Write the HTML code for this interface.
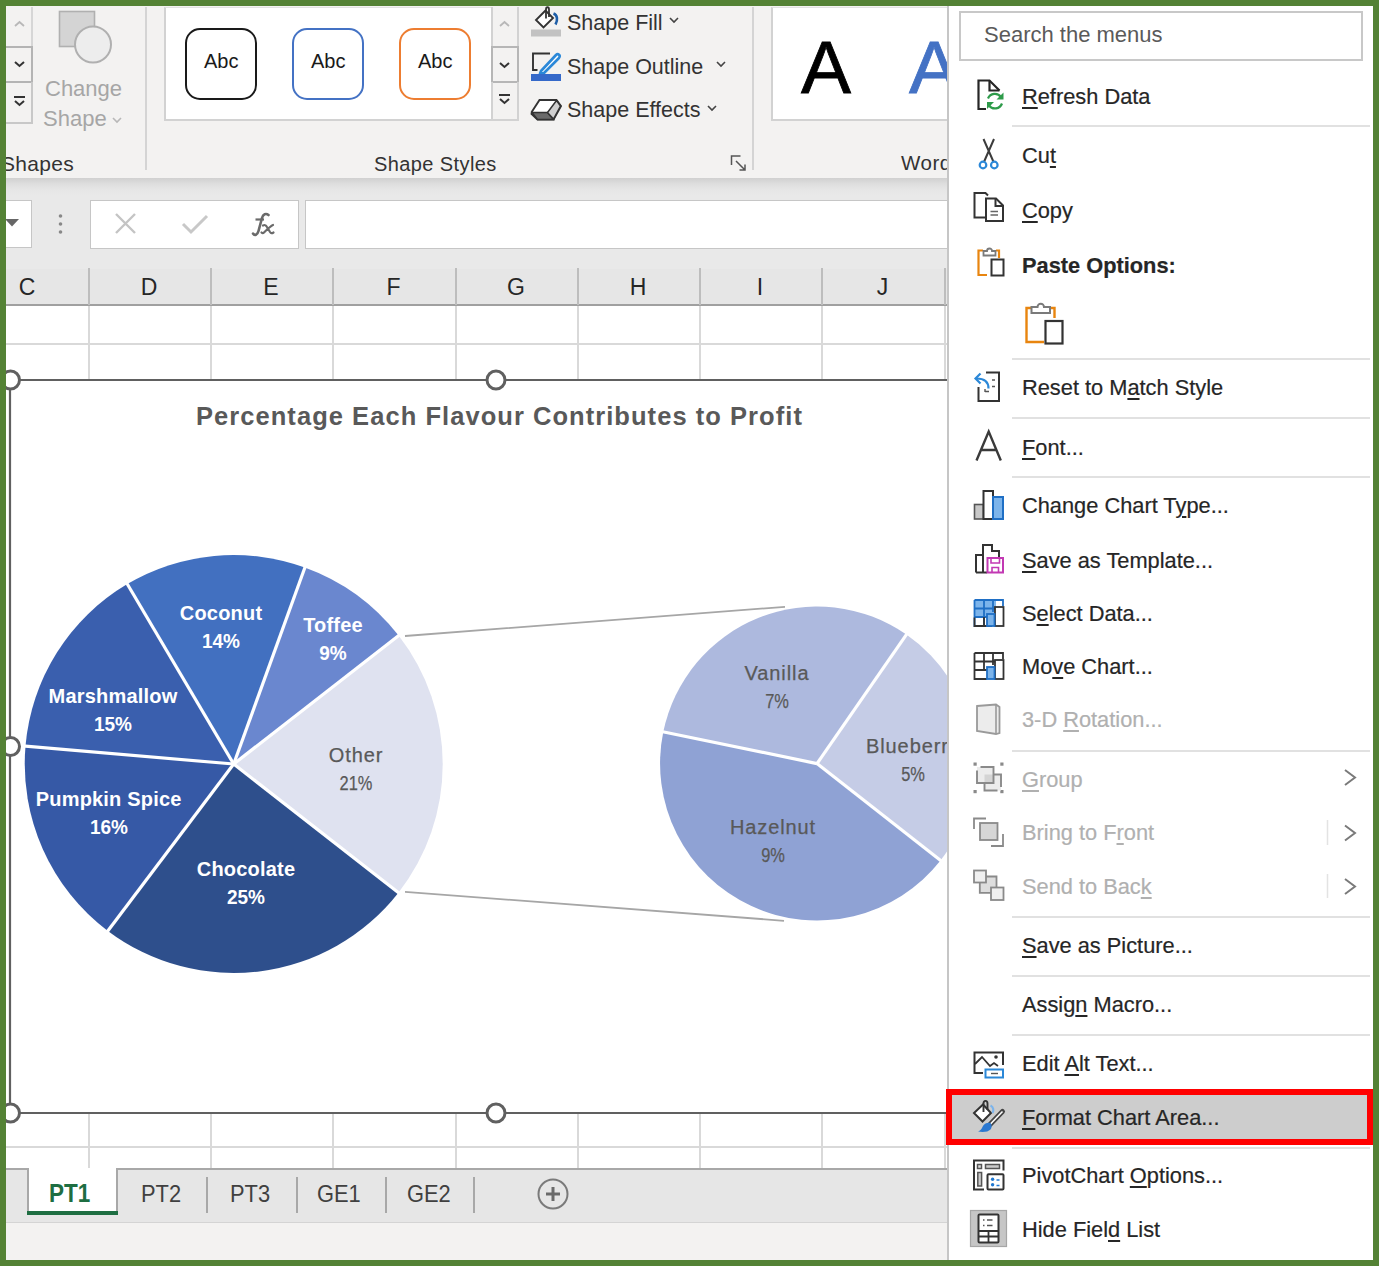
<!DOCTYPE html>
<html><head><meta charset="utf-8">
<style>
*{margin:0;padding:0;box-sizing:border-box}
html,body{width:1379px;height:1266px;overflow:hidden;background:#548235;font-family:"Liberation Sans",sans-serif}
.a{position:absolute}
.t{position:absolute;line-height:1;white-space:nowrap}
u{text-decoration-thickness:2px;text-underline-offset:3px}
.m{-webkit-text-stroke:0.2px currentColor}
.lb{font-weight:bold;letter-spacing:0.2px}
.lg{letter-spacing:0.9px;-webkit-text-stroke:0.25px currentColor}
.pc{letter-spacing:0;transform:scaleX(0.95);transform-origin:50% 0}
.lg.pc{transform:scaleX(0.82)}
</style></head><body>
<div class="a" style="left:6px;top:6px;width:1367px;height:1254px;background:#fff"></div>
<!-- RIBBON -->
<div class="a" style="left:6px;top:6px;width:942px;height:172px;background:#f3f2f1"></div>
<!-- left scroll buttons -->
<div class="a" style="left:6px;top:7px;width:27px;height:40px;border-right:2px solid #d6d6d6;background:#f3f2f1"></div>
<div class="a" style="left:6px;top:46px;width:27px;height:37px;border:2px solid #b4b4b4;border-left:none"></div>
<div class="a" style="left:6px;top:82px;width:27px;height:42px;border:2px solid #c8c8c8;border-left:none;border-top:none"></div>
<svg class="a" style="left:0;top:0" width="760" height="180" fill="none">
<path d="M15,26 L19.5,22 L24,26" stroke="#b8b8b8" stroke-width="1.8"/>
<path d="M15,62 L19.5,66 L24,62" stroke="#333" stroke-width="2"/>
<path d="M14,97 H25 M15,101 L19.5,105 L24,101" stroke="#333" stroke-width="2"/>
<!-- change shape -->
<rect x="59.5" y="11.5" width="35" height="35" fill="#d4d4d4" stroke="#b0b0b0" stroke-width="1.6"/>
<circle cx="93" cy="44.5" r="18" fill="#ededed" stroke="#b0b0b0" stroke-width="2"/>
<path d="M113,118 L117,122 L121,118" stroke="#b8b8b8" stroke-width="1.6"/>
<!-- gallery scroll -->
<path d="M500,26 L504.5,22 L509,26" stroke="#b8b8b8" stroke-width="1.8"/>
<path d="M500,63 L504.5,67 L509,63" stroke="#333" stroke-width="2"/>
<path d="M499,95 H510 M500,99 L504.5,103 L509,99" stroke="#333" stroke-width="2"/>
<!-- shape fill icon -->
<path d="M545.5,10.5 L536,20 L543.5,27.5 L553,18 Z" stroke="#333" stroke-width="1.9" fill="#fff"/>
<path d="M546,18.5 V9.5 C546,6.5 549,6.5 549,9.5 V17" stroke="#333" stroke-width="1.8"/>
<path d="M553.5,13.5 C557.5,15 558,20 555.5,24.5" stroke="#1f5fa8" stroke-width="2.6"/>
<rect x="531" y="29.5" width="30" height="7" fill="#c2c2c2"/>
<!-- shape outline icon -->
<path d="M537.5,70 H533 V53.5 H550" stroke="#333" stroke-width="1.9"/>
<path d="M541,71 L556,55 C558,53 561,55.5 559,58 L544,73 L540,73.5 Z" stroke="#2b88d8" stroke-width="2.6" fill="#fff" stroke-linejoin="round"/>
<rect x="531" y="74" width="30" height="7" fill="#3569c9"/>
<!-- shape effects icon -->
<path d="M532,111.5 L539.5,100 H556.5 L561,106 L553.5,119.5 H537.5 L531.5,114 Z" stroke="#333" stroke-width="1.9" fill="#fff"/>
<path d="M532,112.5 H547.5 L553.5,119.5 H537.5 Z" fill="#6a6a6a" stroke="#333" stroke-width="1.5"/>
<path d="M547.5,112.5 L556.5,100.5 L560.5,106 L553.5,119 Z" fill="#cfcfcf" stroke="#333" stroke-width="1.5"/>
<!-- chevrons -->
<path d="M670,18 L674,22 L678,18 M717,62 L721,66 L725,62 M708,106 L712,110 L716,106" stroke="#444" stroke-width="1.6"/>
<!-- dialog launcher -->
<path d="M731,170 V156 H745 V170 H731" stroke="#444" stroke-width="0"/>
<path d="M731.5,165 V156 H740.5 M736,161 L745,170 M739.5,170 H745 V164.5" stroke="#555" stroke-width="1.5"/>
</svg>
<div class="t" style="left:45px;top:77.5px;font-size:22px;color:#a6a6a6">Change</div>
<div class="t" style="left:43px;top:107.5px;font-size:22px;color:#a6a6a6">Shape</div>
<div class="t" style="left:1px;top:153px;font-size:21px;letter-spacing:0.3px;color:#333">Shapes</div>
<div class="a" style="left:145px;top:7px;width:2px;height:163px;background:#d4d4d4"></div>
<!-- styles gallery -->
<div class="a" style="left:164px;top:7px;width:328px;height:114px;background:#fff;border:2px solid #d2d2d2;border-top:1px solid #e2e2e2;border-right:none"></div>
<div class="a" style="left:491px;top:7px;width:28px;height:40px;border-left:2px solid #d2d2d2;border-right:2px solid #d2d2d2"></div>
<div class="a" style="left:491px;top:46px;width:28px;height:37px;border:2px solid #b6b6b6"></div>
<div class="a" style="left:491px;top:82px;width:28px;height:39px;border:2px solid #d2d2d2;border-top:none"></div>
<div class="a" style="left:185px;top:28px;width:72px;height:72px;border:2.5px solid #1a1a1a;border-radius:15px"></div>
<div class="a" style="left:292px;top:28px;width:72px;height:72px;border:2px solid #4472c4;border-radius:15px"></div>
<div class="a" style="left:399px;top:28px;width:72px;height:72px;border:2px solid #ed7d31;border-radius:15px"></div>
<div class="t" style="left:204px;top:51px;font-size:20px;color:#1a1a1a">Abc</div>
<div class="t" style="left:311px;top:51px;font-size:20px;color:#1a1a1a">Abc</div>
<div class="t" style="left:418px;top:51px;font-size:20px;color:#1a1a1a">Abc</div>
<div class="t" style="left:567px;top:13px;font-size:21.5px;color:#333">Shape Fill</div>
<div class="t" style="left:567px;top:56.5px;font-size:21.5px;color:#333">Shape Outline</div>
<div class="t" style="left:567px;top:100px;font-size:21.5px;color:#333">Shape Effects</div>
<div class="t" style="left:374px;top:153.5px;font-size:20px;letter-spacing:0.4px;color:#333">Shape Styles</div>
<div class="a" style="left:752px;top:7px;width:2px;height:163px;background:#d4d4d4"></div>
<!-- wordart gallery -->
<div class="a" style="left:771px;top:7px;width:180px;height:114px;background:#fff;border:2px solid #d2d2d2;border-top:1px solid #e2e2e2;border-right:none"></div>
<div class="t" style="left:801px;top:30px;font-size:75px;color:#000;-webkit-text-stroke:0.8px #000">A</div>
<div class="t" style="left:909px;top:30px;font-size:75px;color:#4472c4;-webkit-text-stroke:0.8px #4472c4">A</div>
<div class="t" style="left:901px;top:153px;font-size:20.5px;letter-spacing:0.5px;color:#333">Word</div>
<!-- shadow + formula bar background -->
<div class="a" style="left:6px;top:178px;width:942px;height:91px;background:linear-gradient(#d0d0d0 0px,#dedede 6px,#e6e6e6 12px,#e9e9e9 18px,#e9e9e9 100%)"></div>
<div class="a" style="left:6px;top:200px;width:26px;height:48px;background:#fff;border:1.5px solid #c6c6c6;border-left:none"></div>
<svg class="a" style="left:0;top:180px" width="320" height="80" fill="none">
<path d="M5,39 H19 L12,46.5 Z" fill="#666"/>
<circle cx="60.5" cy="36" r="1.8" fill="#888"/><circle cx="60.5" cy="44" r="1.8" fill="#888"/><circle cx="60.5" cy="52" r="1.8" fill="#888"/>
</svg>
<div class="a" style="left:90px;top:200px;width:209px;height:49px;background:#fff;border:1.5px solid #c6c6c6"></div>
<svg class="a" style="left:0;top:180px" width="320" height="80" fill="none">
<path d="M116,34 L135,53 M135,34 L116,53" stroke="#c4c4c4" stroke-width="2.4"/>
<path d="M183,44 L191,52 L207,36" stroke="#c8c8c8" stroke-width="3"/>
</svg>
<svg class="a" style="left:240px;top:205px" width="45" height="40" fill="none">
<path d="M13,28.5 C14.5,31 17.5,30 18.5,26 L22,13 C23,9 26,8 28.5,10" stroke="#6a6a6a" stroke-width="2.6" stroke-linecap="round"/>
<path d="M15.5,14.5 H24" stroke="#6a6a6a" stroke-width="2.2"/>
<path d="M23,20.5 C25,19.5 26,20 27,22 L30,27 C31,28.5 32,28.5 33.5,27.5 M33,20 C31.5,20.5 29,23 27.5,24 L24,27.5 C23,28.5 22,28 21.5,27.5" stroke="#6a6a6a" stroke-width="2.2" stroke-linecap="round"/>
</svg>
<div class="a" style="left:305px;top:200px;width:645px;height:49px;background:#fff;border:1.5px solid #c6c6c6"></div>
<div class="a" style="left:6px;top:269px;width:942px;height:37px;background:#e6e6e6;border-bottom:2px solid #a0a0a0"></div>
<div class="a" style="left:88px;top:268px;width:1.5px;height:37px;background:#bdbdbd"></div>
<div class="t" style="left:-3.0px;width:60px;text-align:center;top:275.8px;font-size:23px;color:#262626">C</div>
<div class="a" style="left:210px;top:268px;width:1.5px;height:37px;background:#bdbdbd"></div>
<div class="t" style="left:119.0px;width:60px;text-align:center;top:275.8px;font-size:23px;color:#262626">D</div>
<div class="a" style="left:332px;top:268px;width:1.5px;height:37px;background:#bdbdbd"></div>
<div class="t" style="left:241.0px;width:60px;text-align:center;top:275.8px;font-size:23px;color:#262626">E</div>
<div class="a" style="left:455px;top:268px;width:1.5px;height:37px;background:#bdbdbd"></div>
<div class="t" style="left:363.5px;width:60px;text-align:center;top:275.8px;font-size:23px;color:#262626">F</div>
<div class="a" style="left:577px;top:268px;width:1.5px;height:37px;background:#bdbdbd"></div>
<div class="t" style="left:486.0px;width:60px;text-align:center;top:275.8px;font-size:23px;color:#262626">G</div>
<div class="a" style="left:699px;top:268px;width:1.5px;height:37px;background:#bdbdbd"></div>
<div class="t" style="left:608.0px;width:60px;text-align:center;top:275.8px;font-size:23px;color:#262626">H</div>
<div class="a" style="left:821px;top:268px;width:1.5px;height:37px;background:#bdbdbd"></div>
<div class="t" style="left:730.0px;width:60px;text-align:center;top:275.8px;font-size:23px;color:#262626">I</div>
<div class="a" style="left:944px;top:268px;width:1.5px;height:37px;background:#bdbdbd"></div>
<div class="t" style="left:852.5px;width:60px;text-align:center;top:275.8px;font-size:23px;color:#262626">J</div>
<div class="a" style="left:6px;top:306px;width:942px;height:862px;background:#fff"></div>
<div class="a" style="left:6px;top:343px;width:942px;height:1.5px;background:#d9d9d9"></div>
<div class="a" style="left:6px;top:1146px;width:942px;height:1.5px;background:#d9d9d9"></div>
<div class="a" style="left:88px;top:306px;width:1.5px;height:74px;background:#d9d9d9"></div>
<div class="a" style="left:88px;top:1113px;width:1.5px;height:56px;background:#d9d9d9"></div>
<div class="a" style="left:210px;top:306px;width:1.5px;height:74px;background:#d9d9d9"></div>
<div class="a" style="left:210px;top:1113px;width:1.5px;height:56px;background:#d9d9d9"></div>
<div class="a" style="left:332px;top:306px;width:1.5px;height:74px;background:#d9d9d9"></div>
<div class="a" style="left:332px;top:1113px;width:1.5px;height:56px;background:#d9d9d9"></div>
<div class="a" style="left:455px;top:306px;width:1.5px;height:74px;background:#d9d9d9"></div>
<div class="a" style="left:455px;top:1113px;width:1.5px;height:56px;background:#d9d9d9"></div>
<div class="a" style="left:577px;top:306px;width:1.5px;height:74px;background:#d9d9d9"></div>
<div class="a" style="left:577px;top:1113px;width:1.5px;height:56px;background:#d9d9d9"></div>
<div class="a" style="left:699px;top:306px;width:1.5px;height:74px;background:#d9d9d9"></div>
<div class="a" style="left:699px;top:1113px;width:1.5px;height:56px;background:#d9d9d9"></div>
<div class="a" style="left:821px;top:306px;width:1.5px;height:74px;background:#d9d9d9"></div>
<div class="a" style="left:821px;top:1113px;width:1.5px;height:56px;background:#d9d9d9"></div>
<div class="a" style="left:944px;top:306px;width:1.5px;height:74px;background:#d9d9d9"></div>
<div class="a" style="left:944px;top:1113px;width:1.5px;height:56px;background:#d9d9d9"></div>
<div class="a" style="left:10px;top:380px;width:960px;height:733px;background:#fff"></div>
<svg class="a" style="left:0;top:0" width="948" height="1266" fill="none">
<path d="M233.7,764 L304.8,567.5 A209,209 0 0 1 398.6,635.6 Z" fill="#6a87cf"/>
<path d="M233.7,764 L398.6,635.6 A209,209 0 0 1 398.4,892.7 Z" fill="#dfe2f0"/>
<path d="M233.7,764 L398.4,892.7 A209,209 0 0 1 107.9,930.9 Z" fill="#2e4f8c"/>
<path d="M233.7,764 L107.9,930.9 A209,209 0 0 1 25.5,746.1 Z" fill="#3659a6"/>
<path d="M233.7,764 L25.5,746.1 A209,209 0 0 1 127.3,584.1 Z" fill="#3a5fae"/>
<path d="M233.7,764 L127.3,584.1 A209,209 0 0 1 304.8,567.5 Z" fill="#4270c0"/>
<line x1="233.7" y1="764" x2="305.9" y2="564.7" stroke="#fff" stroke-width="3.2"/>
<line x1="233.7" y1="764" x2="401.0" y2="633.8" stroke="#fff" stroke-width="3.2"/>
<line x1="233.7" y1="764" x2="400.8" y2="894.5" stroke="#fff" stroke-width="3.2"/>
<line x1="233.7" y1="764" x2="106.1" y2="933.3" stroke="#fff" stroke-width="3.2"/>
<line x1="233.7" y1="764" x2="22.5" y2="745.9" stroke="#fff" stroke-width="3.2"/>
<line x1="233.7" y1="764" x2="125.8" y2="581.5" stroke="#fff" stroke-width="3.2"/>
<path d="M817,763.6 L906.4,634.5 A157,157 0 0 1 940.5,860.5 Z" fill="#c5cce6"/>
<path d="M817,763.6 L940.5,860.5 A157,157 0 0 1 663.3,731.8 Z" fill="#8fa2d4"/>
<path d="M817,763.6 L663.3,731.8 A157,157 0 0 1 906.4,634.5 Z" fill="#adb9de"/>
<line x1="817" y1="763.6" x2="908.1" y2="632.1" stroke="#fff" stroke-width="3.2"/>
<line x1="817" y1="763.6" x2="942.9" y2="862.3" stroke="#fff" stroke-width="3.2"/>
<line x1="817" y1="763.6" x2="660.3" y2="731.2" stroke="#fff" stroke-width="3.2"/>
<path d="M405,636 L785,606.8 M405,891.8 L784,920.8" stroke="#a6a6a6" stroke-width="1.8"/>
<path d="M10,380 H948 M10,1113 H948 M10,380 V1113" stroke="#606060" stroke-width="2.2"/>
<circle cx="10.5" cy="380" r="9" fill="#fff" stroke="#606060" stroke-width="3"/>
<circle cx="496" cy="380" r="9" fill="#fff" stroke="#606060" stroke-width="3"/>
<circle cx="10.5" cy="746.5" r="9" fill="#fff" stroke="#606060" stroke-width="3"/>
<circle cx="10.5" cy="1113" r="9" fill="#fff" stroke="#606060" stroke-width="3"/>
<circle cx="496" cy="1113" r="9" fill="#fff" stroke="#606060" stroke-width="3"/>
</svg>
<div class="t" style="left:196px;top:403.6px;font-size:25.5px;letter-spacing:1.05px;font-weight:bold;color:#595959">Percentage Each Flavour Contributes to Profit</div>
<div class="t lb" style="left:121px;width:200px;text-align:center;top:603.1px;font-size:20px;color:#ffffff">Coconut</div>
<div class="t lb pc" style="left:121px;width:200px;text-align:center;top:631.1px;font-size:20px;color:#ffffff">14%</div>
<div class="t lb" style="left:233px;width:200px;text-align:center;top:614.8px;font-size:20px;color:#ffffff">Toffee</div>
<div class="t lb pc" style="left:233px;width:200px;text-align:center;top:643.1px;font-size:20px;color:#ffffff">9%</div>
<div class="t lb" style="left:13px;width:200px;text-align:center;top:685.7px;font-size:20px;color:#ffffff">Marshmallow</div>
<div class="t lb pc" style="left:13px;width:200px;text-align:center;top:714.1px;font-size:20px;color:#ffffff">15%</div>
<div class="t lg" style="left:256px;width:200px;text-align:center;top:744.9px;font-size:20px;color:#595959">Other</div>
<div class="t lg pc" style="left:256px;width:200px;text-align:center;top:772.9px;font-size:20px;color:#595959">21%</div>
<div class="t lb" style="left:8.700000000000003px;width:200px;text-align:center;top:788.5px;font-size:20px;color:#ffffff">Pumpkin Spice</div>
<div class="t lb pc" style="left:8.700000000000003px;width:200px;text-align:center;top:816.5px;font-size:20px;color:#ffffff">16%</div>
<div class="t lb" style="left:146px;width:200px;text-align:center;top:859.1px;font-size:20px;color:#ffffff">Chocolate</div>
<div class="t lb pc" style="left:146px;width:200px;text-align:center;top:887.1px;font-size:20px;color:#ffffff">25%</div>
<div class="t lg" style="left:677px;width:200px;text-align:center;top:662.6px;font-size:20px;color:#595959">Vanilla</div>
<div class="t lg pc" style="left:677px;width:200px;text-align:center;top:691.1px;font-size:20px;color:#595959">7%</div>
<div class="t lg" style="left:673px;width:200px;text-align:center;top:816.9px;font-size:20px;color:#595959">Hazelnut</div>
<div class="t lg pc" style="left:673px;width:200px;text-align:center;top:845.1px;font-size:20px;color:#595959">9%</div>
<div class="t lg" style="left:866px;top:735.7px;font-size:20px;color:#595959">Blueberry</div>
<div class="t lg pc" style="left:862.5px;width:100px;text-align:center;top:764.1px;font-size:20px;color:#595959">5%</div>
<!-- tab bar -->
<div class="a" style="left:6px;top:1168px;width:942px;height:54px;background:#e6e6e6;border-top:2px solid #a8a8a8"></div>
<div class="a" style="left:27px;top:1168px;width:91px;height:47px;background:#fff;border-left:2px solid #a8a8a8;border-right:2px solid #a8a8a8"></div>
<div class="a" style="left:27px;top:1211px;width:91px;height:4px;background:#1e6e42"></div>
<div class="t" style="left:49px;top:1180.8px;font-size:25px;font-weight:bold;color:#1e6e42;transform:scaleX(0.9);transform-origin:0 0">PT1</div>
<div class="t" style="left:141px;top:1181.7px;font-size:24px;color:#404040;transform:scaleX(0.91);transform-origin:0 0">PT2</div>
<div class="t" style="left:230px;top:1181.7px;font-size:24px;color:#404040;transform:scaleX(0.91);transform-origin:0 0">PT3</div>
<div class="t" style="left:317px;top:1181.7px;font-size:24px;color:#404040;transform:scaleX(0.91);transform-origin:0 0">GE1</div>
<div class="t" style="left:407px;top:1181.7px;font-size:24px;color:#404040;transform:scaleX(0.91);transform-origin:0 0">GE2</div>
<div class="a" style="left:206px;top:1177px;width:2px;height:36px;background:#a8a8a8"></div>
<div class="a" style="left:296px;top:1177px;width:2px;height:36px;background:#a8a8a8"></div>
<div class="a" style="left:385px;top:1177px;width:2px;height:36px;background:#a8a8a8"></div>
<div class="a" style="left:473px;top:1177px;width:2px;height:36px;background:#a8a8a8"></div>
<svg class="a" style="left:530px;top:1171px" width="46" height="46" fill="none">
<circle cx="23" cy="23" r="14.5" stroke="#7a7a7a" stroke-width="2"/>
<path d="M23,16 V30 M16,23 H30" stroke="#6a6a6a" stroke-width="3"/>
</svg>
<!-- status bar -->
<div class="a" style="left:6px;top:1222px;width:942px;height:38px;background:#f3f2f1;border-top:1.5px solid #d4d4d4"></div>
<!-- MENU -->
<div class="a" style="left:947px;top:6px;width:426px;height:1254px;background:#fff;border-left:2px solid #c6c6c6"></div>
<div class="a" style="left:959px;top:11px;width:404px;height:50px;border:2px solid #c8c8c8"></div>
<div class="t" style="left:984px;top:23.8px;font-size:22px;color:#5a5a5a">Search the menus</div>
<div class="a" style="left:946px;top:1089px;width:427px;height:56px;background:#cdcdcd;border:6px solid #ff0000"></div>
<div class="t m" style="left:1022px;top:85.5px;font-size:21.8px;color:#262626"><u>R</u>efresh Data</div>
<div class="t m" style="left:1022px;top:145.0px;font-size:21.8px;color:#262626">Cu<u>t</u></div>
<div class="t m" style="left:1022px;top:199.5px;font-size:21.8px;color:#262626"><u>C</u>opy</div>
<div class="t m" style="left:1022px;top:254.5px;font-size:21.8px;color:#262626;font-weight:bold">Paste Options:</div>
<div class="t m" style="left:1022px;top:376.9px;font-size:21.8px;color:#262626">Reset to M<u>a</u>tch Style</div>
<div class="t m" style="left:1022px;top:436.5px;font-size:21.8px;color:#262626"><u>F</u>ont...</div>
<div class="t m" style="left:1022px;top:495.3px;font-size:21.8px;color:#262626">Change Chart T<u>y</u>pe...</div>
<div class="t m" style="left:1022px;top:549.5px;font-size:21.8px;color:#262626"><u>S</u>ave as Template...</div>
<div class="t m" style="left:1022px;top:602.5px;font-size:21.8px;color:#262626">S<u>e</u>lect Data...</div>
<div class="t m" style="left:1022px;top:655.7px;font-size:21.8px;color:#262626">Mo<u>v</u>e Chart...</div>
<div class="t m" style="left:1022px;top:708.8px;font-size:21.8px;color:#b0b0b0">3-D <u>R</u>otation...</div>
<div class="t m" style="left:1022px;top:768.5px;font-size:21.8px;color:#b0b0b0"><u>G</u>roup</div>
<div class="t m" style="left:1022px;top:821.5px;font-size:21.8px;color:#b0b0b0">Bring to F<u>r</u>ont</div>
<div class="t m" style="left:1022px;top:875.9px;font-size:21.8px;color:#b0b0b0">Send to Bac<u>k</u></div>
<div class="t m" style="left:1022px;top:934.5px;font-size:21.8px;color:#262626"><u>S</u>ave as Picture...</div>
<div class="t m" style="left:1022px;top:994.3px;font-size:21.8px;color:#262626">Assig<u>n</u> Macro...</div>
<div class="t m" style="left:1022px;top:1053.0px;font-size:21.8px;color:#262626">Edit <u>A</u>lt Text...</div>
<div class="t m" style="left:1022px;top:1107.2px;font-size:21.8px;color:#262626"><u>F</u>ormat Chart Area...</div>
<div class="t m" style="left:1022px;top:1164.8px;font-size:21.8px;color:#262626">PivotChart <u>O</u>ptions...</div>
<div class="t m" style="left:1022px;top:1219.1px;font-size:21.8px;color:#262626">Hide Fiel<u>d</u> List</div>
<div class="a" style="left:1012px;top:125.0px;width:358px;height:2px;background:#e1e1e1"></div>
<div class="a" style="left:1012px;top:358.0px;width:358px;height:2px;background:#e1e1e1"></div>
<div class="a" style="left:1012px;top:417.0px;width:358px;height:2px;background:#e1e1e1"></div>
<div class="a" style="left:1012px;top:476.0px;width:358px;height:2px;background:#e1e1e1"></div>
<div class="a" style="left:1012px;top:749.6px;width:358px;height:2px;background:#e1e1e1"></div>
<div class="a" style="left:1012px;top:915.6px;width:358px;height:2px;background:#e1e1e1"></div>
<div class="a" style="left:1012px;top:975.0px;width:358px;height:2px;background:#e1e1e1"></div>
<div class="a" style="left:1012px;top:1034.0px;width:358px;height:2px;background:#e1e1e1"></div>
<div class="a" style="left:1012px;top:1147.0px;width:358px;height:2px;background:#e1e1e1"></div>
<svg class="a" style="left:0;top:0" width="1379" height="1266" viewBox="0 0 1379 1266" fill="none" stroke-linejoin="miter">
<!-- Refresh Data -->
<path d="M986,109 H978.5 V80.5 H989.5 L999.5,90.5" stroke="#262626" stroke-width="2.2"/>
<path d="M989.5,80.5 V90.5 H999.5" stroke="#262626" stroke-width="2.2"/>
<path d="M988,98.5 A7.5,7.5 0 0 1 1001,97" stroke="#2e9b4a" stroke-width="2.2"/>
<path d="M1003.5,92.5 V99.5 H996.5 Z" fill="#2e9b4a"/>
<path d="M1002,103.5 A7.5,7.5 0 0 1 989,105.5" stroke="#2e9b4a" stroke-width="2.2"/>
<path d="M987,109 V102 H994 Z" fill="#2e9b4a"/>
<!-- Cut -->
<path d="M983.5,139 L994,163 M994,139 L983.5,163" stroke="#3c3c3c" stroke-width="2"/>
<circle cx="983" cy="165" r="3.3" stroke="#2b88d8" stroke-width="2.2" fill="#fff"/>
<circle cx="994.3" cy="165" r="3.3" stroke="#2b88d8" stroke-width="2.2" fill="#fff"/>
<!-- Copy -->
<path d="M985.5,217.5 H974.5 V193 H985.5 L988,195.5" stroke="#333" stroke-width="2"/>
<path d="M986,221 V198.5 H996 L1003,205.5 V221 Z" stroke="#333" stroke-width="2" fill="#fff"/>
<path d="M995.5,198.5 V206 H1003" stroke="#333" stroke-width="2"/>
<path d="M990.5,211.5 H998 M990.5,215 H998" stroke="#666" stroke-width="1.4"/>
<!-- Paste small -->
<path d="M987,275 H978.5 V250.5 H983 M996,250.5 H999 V258" stroke="#e8850f" stroke-width="2.2"/>
<path d="M983.5,255.5 V251 H987 A2.5,2.5 0 0 1 992,251 H995.5 V255.5 Z" stroke="#7a7a7a" stroke-width="1.8" fill="#fff"/>
<rect x="991.5" y="259.5" width="12" height="16" stroke="#333" stroke-width="2" fill="#fff"/>
<!-- Paste large -->
<path d="M1044,342 H1026.5 V308 H1031 M1050,308 H1054.5 V318" stroke="#e8850f" stroke-width="2.4"/>
<path d="M1031.5,313 V307 H1037.5 A3,3 0 0 1 1044,307 H1050 V313 Z" stroke="#7a7a7a" stroke-width="2" fill="#fff"/>
<rect x="1045.5" y="321" width="17" height="22.5" stroke="#333" stroke-width="2.2" fill="#fff"/>
<!-- Reset to match style -->
<path d="M978.5,387 V401 H999 V372.5 H986" stroke="#333" stroke-width="2"/>
<path d="M992,380 H995 M992,386.5 H995 M985,391.5 H989 M985,389 V392" stroke="#555" stroke-width="1.4"/>
<path d="M988.5,388.5 C988.5,381 984,378.5 976.5,378.5" stroke="#2b88d8" stroke-width="2.2"/>
<path d="M980.5,373.5 L975.5,378.5 L980.5,383.5" stroke="#2b88d8" stroke-width="2.2"/>
<!-- Font A -->
<path d="M976.5,460.5 L988.7,431.5 L1000.8,460.5 M981,450 H996.5" stroke="#3a3a3a" stroke-width="2.4"/>
<!-- Change chart type -->
<rect x="974.5" y="504.5" width="9" height="14.5" fill="#c8c8c8" stroke="#555" stroke-width="1.6"/>
<rect x="983.5" y="491" width="9.5" height="28" fill="#fff" stroke="#333" stroke-width="2"/>
<rect x="993" y="497" width="10" height="22" fill="#7cb4eb" stroke="#1f6fc5" stroke-width="2"/>
<!-- Save as template -->
<path d="M976,572.5 V555 H983 V545 H992 V551 H999 V557" stroke="#333" stroke-width="2"/>
<path d="M976,572.5 H987" stroke="#333" stroke-width="2"/>
<path d="M983,555 V572" stroke="#333" stroke-width="2"/>
<rect x="987.5" y="558" width="15.5" height="14.5" stroke="#c239b3" stroke-width="2" fill="#fff"/>
<path d="M991,558 V563 H999.5 V558 M992,572.5 V567.5 H998.5 V572.5" stroke="#c239b3" stroke-width="1.6"/>
<!-- Select data -->
<rect x="975" y="600" width="21" height="17" fill="#7cb4eb"/>
<path d="M974.5,600 H1003 V606 M974.5,600 V626 H992 M974.5,608.5 H996 M974.5,617 H992 M984,600 V626 M993,600 V612" stroke="#1f6fc5" stroke-width="1.8"/>
<path d="M974.5,617.5 V626 H992 M984,617 V626" stroke="#333" stroke-width="1.8"/>
<rect x="995" y="607" width="8.5" height="19" stroke="#333" stroke-width="1.8" fill="#fff"/>
<rect x="987" y="614" width="7.5" height="12" fill="#7cb4eb" stroke="#1f6fc5" stroke-width="1.8"/>
<!-- Move chart -->
<path d="M974.5,653 H1003 V659 M974.5,653 V679 H987 M974.5,661.5 H996 M974.5,670 H992 M984,653 V670 M993,653 V665" stroke="#333" stroke-width="1.8"/>
<rect x="995" y="660" width="8.5" height="19" stroke="#333" stroke-width="1.8" fill="#fff"/>
<rect x="987" y="667" width="7.5" height="12" fill="#7cb4eb" stroke="#1f6fc5" stroke-width="1.8"/>
<!-- 3D rotation -->
<path d="M977,706 L996,704.5 L999.5,707 V733 L996,734 L977,731 Z" fill="#ececec" stroke="#9a9a9a" stroke-width="1.8"/>
<path d="M996,704.5 V734" stroke="#9a9a9a" stroke-width="1.6"/>
<!-- Group -->
<g fill="#8a8a8a"><rect x="973.5" y="762.5" width="3.2" height="3.2"/><rect x="1000.3" y="762.5" width="3.2" height="3.2"/><rect x="973.5" y="790" width="3.2" height="3.2"/><rect x="1000.3" y="790" width="3.2" height="3.2"/></g>
<rect x="977" y="767" width="16.5" height="16" fill="#ececec"/>
<rect x="984.5" y="774.5" width="16.5" height="16" fill="#ececec"/>
<rect x="984.5" y="774.5" width="9" height="8.5" fill="#d4d4d4"/>
<path d="M977,770.5 V783 H993.5 V767 H980.5" stroke="#8a8a8a" stroke-width="1.9"/>
<path d="M984.5,782 V790.5 H997.5 M1001,787 V774.5 H993" stroke="#8a8a8a" stroke-width="1.9"/>
<!-- Bring to front -->
<path d="M974,829 V818.5 H986" stroke="#8a8a8a" stroke-width="1.8"/>
<path d="M1003,834 V846 H991" stroke="#8a8a8a" stroke-width="1.8"/>
<rect x="980" y="823" width="17.5" height="17" fill="#d6d6d6" stroke="#8a8a8a" stroke-width="1.8"/>
<!-- Send to back -->
<rect x="979.5" y="876" width="17.5" height="17" fill="#dedede"/>
<path d="M986,876.5 H996.5 V887.5 M979.8,882.5 V892.8 H991" stroke="#8a8a8a" stroke-width="1.8"/>
<rect x="974" y="870.5" width="12" height="12" fill="#f0f0f0" stroke="#8a8a8a" stroke-width="1.8"/>
<rect x="991" y="887.5" width="12.5" height="12.5" fill="#f0f0f0" stroke="#8a8a8a" stroke-width="1.8"/>
<!-- submenu arrows -->
<path d="M1345,770 L1355,777.5 L1345,785 M1345,825.5 L1355,833 L1345,840.5 M1345,879 L1355,886.5 L1345,894" stroke="#7a7a7a" stroke-width="2"/>
<path d="M1327.5,820 V845 M1327.5,874 V898" stroke="#e3e3e3" stroke-width="1.5"/>
<!-- Edit alt text -->
<path d="M983,1073 H974.5 V1052.5 H1003 V1065" stroke="#333" stroke-width="2"/>
<path d="M975,1064 L982,1057 L990,1066 L994,1063 L998,1066" stroke="#333" stroke-width="1.8"/>
<circle cx="996" cy="1057" r="1.8" fill="#333"/>
<rect x="985.5" y="1069.5" width="17.5" height="8" stroke="#2b88d8" stroke-width="2" fill="#fff"/>
<path d="M991,1073.5 H998" stroke="#555" stroke-width="1.4"/>
<!-- Format chart area -->
<path d="M983,1104.5 L974,1113 L982.5,1121.5 L991,1113 Z" stroke="#333" stroke-width="2" fill="#fff"/>
<path d="M983.5,1112 V1103.5 C983.5,1100 987.5,1100 987.5,1103.5 V1110" stroke="#333" stroke-width="1.9"/>
<path d="M990.5,1105.5 C993.5,1107 994,1110.5 992.5,1113" stroke="#7cb4eb" stroke-width="2.2"/>
<path d="M1002.5,1111.5 L990,1124.5" stroke="#444" stroke-width="5" stroke-linecap="round"/>
<path d="M1002.5,1111.5 L990,1124.5" stroke="#fff" stroke-width="1.6"/>
<path d="M990.5,1123 C986,1121.5 983,1125 982,1128 C981,1130 979.5,1131 978,1131.5 C983,1132.5 988,1132 990.5,1129.5 C992,1127.5 992,1125 990.5,1123 Z" fill="#2b78d0"/>
<!-- PivotChart options -->
<path d="M984,1189.5 H974 V1160.5 H1003.5 V1170.5" stroke="#333" stroke-width="2"/>
<rect x="977.5" y="1164.5" width="4" height="4" stroke="#555" stroke-width="1.5" fill="#ddd"/>
<rect x="985.5" y="1164.5" width="14" height="4" stroke="#555" stroke-width="1.5" fill="#ccc"/>
<rect x="977.8" y="1172.5" width="3.8" height="13.5" stroke="#555" stroke-width="1.5" fill="#ccc"/>
<rect x="987.5" y="1174.2" width="16" height="15.3" rx="1" stroke="#333" stroke-width="2" fill="#fff"/>
<circle cx="992.6" cy="1179.2" r="1.7" fill="#1f78d1"/><circle cx="992.6" cy="1184.8" r="1.7" fill="#1f78d1"/>
<path d="M996.5,1180 H999.5 M996.5,1185.5 H999.5" stroke="#1f78d1" stroke-width="1.5"/>
<!-- Hide field list -->
<rect x="970.5" y="1210.5" width="36" height="36" fill="#c6c6c6" stroke="#a6a6a6" stroke-width="1.2"/>
<rect x="978.5" y="1214.5" width="20" height="28" rx="1" fill="#fff" stroke="#333" stroke-width="2"/>
<path d="M983,1220 H984.5 M987,1220 H992.5 M983,1225.5 H984.5 M987,1225.5 H992.5" stroke="#555" stroke-width="1.6"/>
<path d="M978.5,1231 H998.5 M978.5,1236.5 H998.5 M988.5,1231 V1242.5" stroke="#333" stroke-width="1.8"/>
</svg>
<div class="a" style="left:0;top:0;width:1379px;height:6px;background:#548235"></div>
<div class="a" style="left:0;top:1260px;width:1379px;height:6px;background:#548235"></div>
<div class="a" style="left:0;top:0;width:6px;height:1266px;background:#548235"></div>
<div class="a" style="left:1373px;top:0;width:6px;height:1266px;background:#548235"></div>
</body></html>
